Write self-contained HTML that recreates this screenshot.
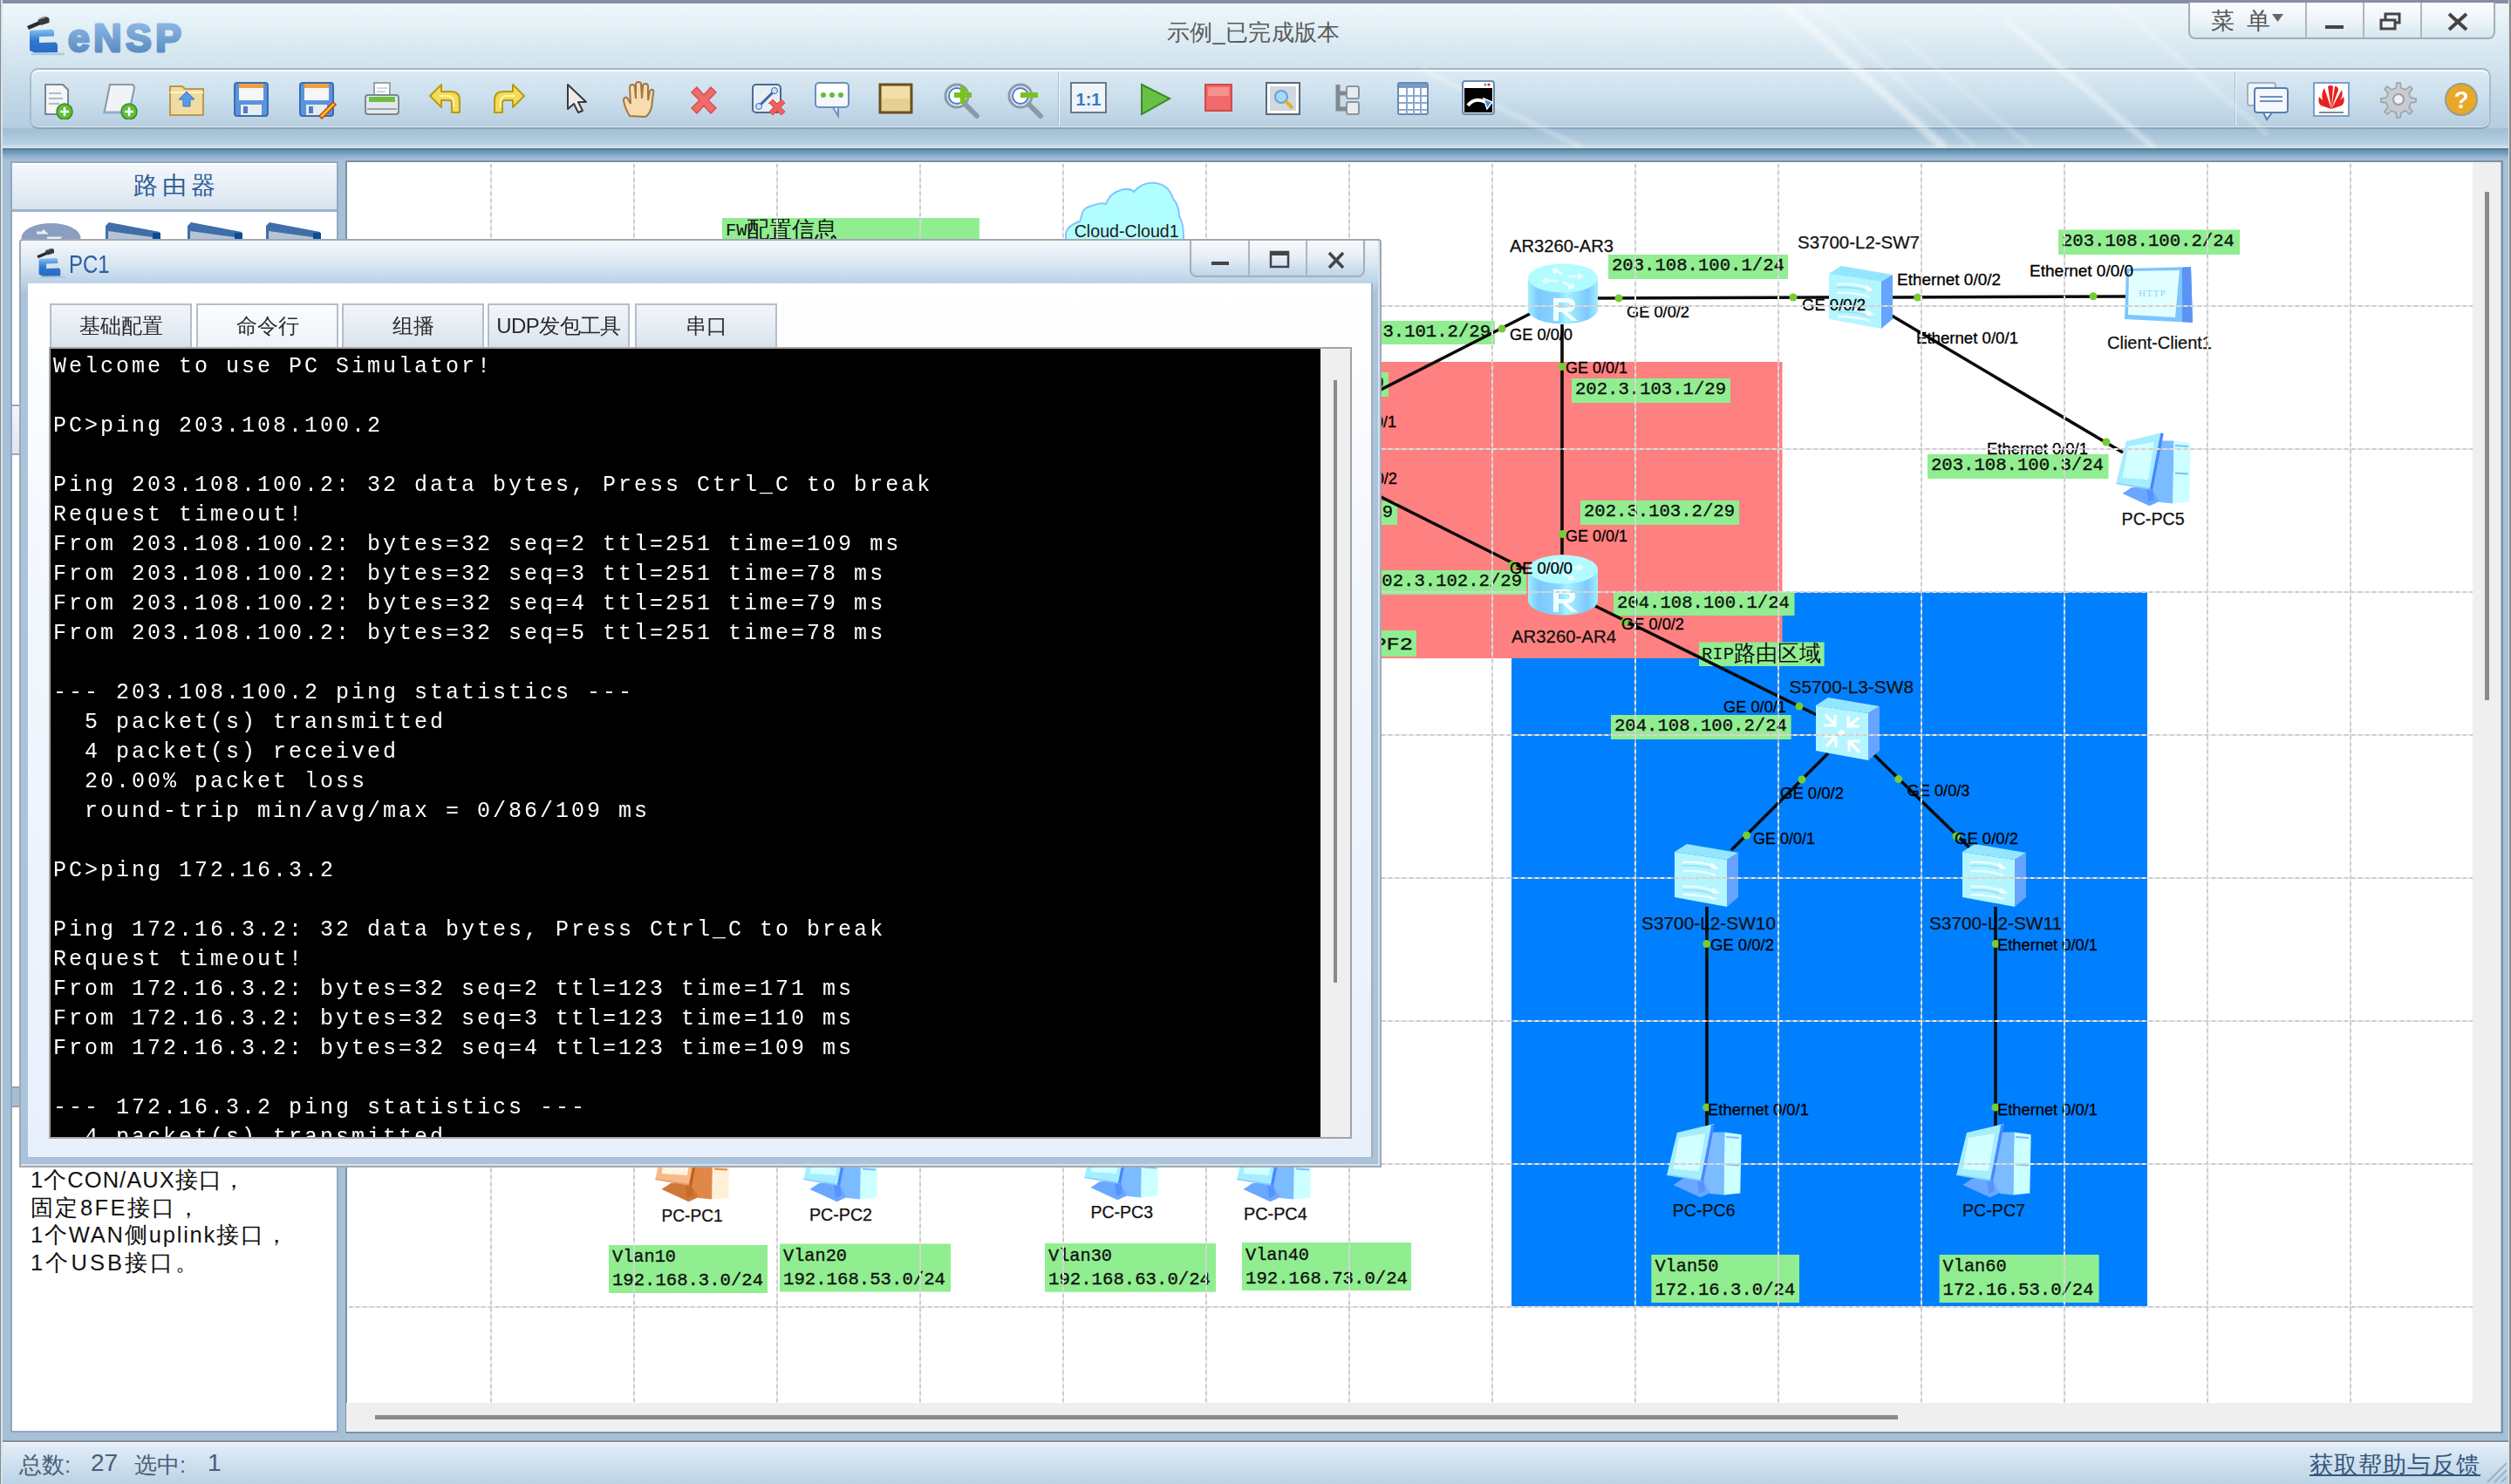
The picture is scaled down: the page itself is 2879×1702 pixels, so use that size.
<!DOCTYPE html>
<html><head><meta charset="utf-8"><style>
*{margin:0;padding:0;box-sizing:border-box}
html,body{width:2879px;height:1702px;overflow:hidden;background:#a6c0d6;font-family:"Liberation Sans",sans-serif}
.a{position:absolute}
#top{left:0;top:0;width:2879px;height:172px;background:linear-gradient(#8a8ca4 0,#8a8ca4 4px,#eef8fb 4px,#cfe2ed 78px,#b4cde0 146px,#a0bed5 148px,#b6d0e1 165px,#cfe1eb 168px,#cfe1eb 172px)}
#tb{left:34px;top:78px;width:2822px;height:70px;border:2px solid #a8bccc;border-top-color:#a2b6c6;border-bottom-color:#8ca4b8;border-radius:10px;background:linear-gradient(#dcebf4,#cadeec 50%,#b8cfe1);box-shadow:inset 0 2px 0 #fafdff,inset 0 -1px 0 #dde8ef}
.sep{top:2px;width:2px;height:62px;background:#a8bccd;border-right:1px solid #eef6fb}
#band{left:0;top:170px;width:2879px;height:17px;background:linear-gradient(#5f7d8e 0,#5f7d8e 2px,#5b90b5 2px,#6e9cbc 5px,#8fb0cb 9px,#a5c1d8 14px)}
#rb{left:2876px;top:0;width:3px;height:1702px;background:linear-gradient(90deg,#d8e4ee 0,#d8e4ee 1px,#8a8a8a 1px)}
#lb{left:0;top:0;width:4px;height:1702px;background:linear-gradient(90deg,#8a8a8a 0,#8a8a8a 1.5px,#d4e2ec 1.5px,#d4e2ec 3px,rgba(0,0,0,0) 3px)}
#lp{left:12px;top:185px;width:376px;height:1458px;background:#fff;border:2px solid #90a8c4}
#lph{left:0;top:0;width:372px;height:56px;background:linear-gradient(#f4f7fb,#e8eef6 50%,#d8e3ee);border-bottom:3px solid #9cb3c9;border-top:2px solid #fff}
#lph span{position:absolute;left:2px;width:372px;top:5px;text-align:center;font-size:28px;letter-spacing:5px;color:#2a5c9a}
#cvw{left:397px;top:186px;width:2438px;height:1423px;background:#fff;overflow:hidden}
#cvsvg{position:absolute;left:-397px;top:-186px}
#vsb{left:2835px;top:186px;width:32px;height:1423px;background:#efefef}
#hsb{left:397px;top:1609px;width:2470px;height:33px;background:#efefef}
#cvframe{left:396px;top:184px;width:2474px;height:1460px;border:2px solid #7e90a4}
#status{left:0;top:1652px;width:2879px;height:50px;background:linear-gradient(#e4eff8,#cfe0ee 50%,#bcd3e6);border-top:2px solid #888e96;box-shadow:inset 0 1px 0 #fff}
#win{left:22px;top:274px;width:1562px;height:1065px;border:2px solid #a2a8b0;border-radius:4px 4px 0 0;box-shadow:inset -2px 0 0 #d6e2ec,inset 0 -2px 0 #d6e2ec;background:linear-gradient(#f4f7fb,#dce8f3 25px,#b8d0e6 50px,#a9c4dc 60px,#a8c3db);}
#client{left:8px;top:49px;width:1542px;height:1003px;background:linear-gradient(#ffffff,#f4f8fe 30%,#e8f0fc);border-right:2px solid #a6aeb6;border-bottom:1px solid #b0b8c0}
#term{left:26px;top:75px;width:1456px;height:904px;background:#000;overflow:hidden}
#termb{left:24px;top:73px;width:1494px;height:908px;border:2px solid #a4a4a4}
#tsb{left:1482px;top:75px;width:34px;height:904px;background:#efefef}
#term pre{font-family:"Liberation Mono",monospace;font-size:25px;letter-spacing:3px;line-height:34px;color:#fff;padding:4px 0 0 3px}
.tab{top:23px;height:51px;width:163px;border:2px solid #b4bec8;border-bottom:none;background:linear-gradient(#f2f5fa,#e4ebf3 60%,#d8e2ec);font-size:24px;color:#2a2a2a;text-align:center;line-height:48px}
.wbtn{border:2px solid #a7adb5;border-top:none;background:linear-gradient(#f8fafd,#e8eff6 45%,#bcd5ea)}
</style></head><body>
<div id="top" class="a"></div>

<svg class="a" style="left:28px;top:18px" width="48" height="48" viewBox="0 0 48 48">
<defs><linearGradient id="lgb100" x1="0" x2="0" y1="0" y2="1"><stop offset="0" stop-color="#8cc0f0"/><stop offset=".5" stop-color="#2f78d0"/><stop offset="1" stop-color="#2a6cc0"/></linearGradient></defs>
<path d="M3 12 L17 6 L19 10 L5 16 Z" fill="#2a2a2a"/><path d="M15 5 L25 1.5 Q28 1 28.5 4 L28.5 8 L19 11 Z" fill="#3a3a3a"/><path d="M17 3.5 L25 1" stroke="#9a9a9a" stroke-width="1.5"/>
<path d="M6 17 L32 15.5 L34 18 L34 23.5 L17 24 L17 31 L36 30.5 L38 33 L38 42 L12 42.5 L6 40 Z" fill="url(#lgb100)"/>
<path d="M8 44 L46 44" stroke="#a8c4dc" stroke-width="2.5" opacity=".8"/>
</svg>
<svg class="a" style="left:70px;top:10px" width="160" height="60"><defs><linearGradient id="eg" gradientUnits="userSpaceOnUse" x1="0" y1="14" x2="0" y2="50"><stop offset="0" stop-color="#90bae4"/><stop offset="1" stop-color="#5b8cc2"/></linearGradient></defs><text x="8" y="48.7" font-family="Liberation Sans" font-weight="bold" font-size="44.5" fill="url(#eg)" stroke="url(#eg)" stroke-width="3" stroke-linejoin="round" textLength="130" lengthAdjust="spacing">eNSP</text></svg>
<div class="a" style="left:1338px;top:20px;font-size:25.5px;color:#5a5a5a;letter-spacing:0.3px">示例_已完成版本</div>
<div class="a wbtn" style="left:2509px;top:3px;width:352px;height:42px;border-radius:0 0 8px 8px;background:linear-gradient(#fbfdff,#eef5fa 50%,#d6e6f1)"></div><div class="a" style="left:2643px;top:3px;width:2px;height:41px;background:#b0b6bd"></div><div class="a" style="left:2709px;top:3px;width:2px;height:41px;background:#b0b6bd"></div><div class="a" style="left:2775px;top:3px;width:2px;height:41px;background:#b0b6bd"></div><div class="a" style="left:2535px;top:6px;font-size:27px;color:#555;letter-spacing:14px">菜单</div><svg class="a" style="left:2605px;top:16px" width="14" height="10"><path d="M0 0h13l-6.5 9z" fill="#666"/></svg><div class="a" style="left:2666px;top:29px;width:21px;height:4px;background:#444"></div><svg class="a" style="left:2728px;top:14px" width="26" height="22"><rect x="7" y="2" width="16" height="10" fill="none" stroke="#444" stroke-width="3"/><rect x="2" y="9" width="16" height="10" fill="#f0f4f8" stroke="#444" stroke-width="3"/></svg><svg class="a" style="left:2806px;top:14px" width="24" height="22"><path d="M2 2L22 20M22 2L2 20" stroke="#444" stroke-width="4"/></svg>
<div id="tb" class="a"><div class="a sep" style="left:1177px"></div><div class="a sep" style="left:2526px"></div></div>
<svg class="a" style="left:0;top:4px" width="2879" height="166"><defs><filter id="bl" x="-20%" y="-20%" width="140%" height="140%"><feGaussianBlur stdDeviation="2.5"/></filter></defs><g stroke="#fff" fill="none" filter="url(#bl)"><path d="M2040 -4 L2230 166" stroke-width="10" opacity=".45"/><path d="M2075 -4 L2265 166" stroke-width="4" opacity=".35"/><path d="M2300 20 L2470 166" stroke-width="8" opacity=".4"/><path d="M1630 76 L1815 166" stroke-width="5" opacity=".35"/><path d="M2180 40 L2330 166" stroke-width="4" opacity=".3"/><path d="M2420 -4 L2600 150" stroke-width="5" opacity=".3"/></g></svg>
<svg class="a" style="left:44px;top:93px" width="44" height="44" viewBox="0 0 44 44"><path d="M8 4 h20 l6 6 v28 h-26z" fill="#f4f6f8" stroke="#7a8894" stroke-width="2"/><path d="M12 14h14M12 20h16M12 26h12" stroke="#b0bcc6" stroke-width="2"/><circle cx="30" cy="35" r="9" fill="#5cbf3a" stroke="#3a8a22" stroke-width="1.5"/><path d="M25 35 h10 M30 30 v10" stroke="#fff" stroke-width="2.5"/></svg><svg class="a" style="left:116px;top:93px" width="44" height="44" viewBox="0 0 44 44"><path d="M10 4 h24 q4 0 4 4 l-6 28 h-26 q-2 0 -2 -2z" fill="#f0f4f6" stroke="#8a98a4" stroke-width="2"/><path d="M2 36 h26" stroke="#8ab0d0" stroke-width="3"/><circle cx="32" cy="35" r="9" fill="#5cbf3a" stroke="#3a8a22" stroke-width="1.5"/><path d="M27 35 h10 M32 30 v10" stroke="#fff" stroke-width="2.5"/></svg><svg class="a" style="left:193px;top:93px" width="44" height="44" viewBox="0 0 44 44"><path d="M2 6 h14 l3 3 h21 v30 h-38z" fill="#f0dca0" stroke="#b89a50" stroke-width="2"/><path d="M2 13 h38" stroke="#fff4c8" stroke-width="2"/><path d="M21 12 l9 9 h-5 v8 h-8 v-8 h-5z" fill="#5a9ae8" stroke="#3a70c0" stroke-width="1"/></svg><svg class="a" style="left:267px;top:93px" width="44" height="44" viewBox="0 0 44 44"><rect x="2" y="2" width="38" height="38" rx="3" fill="#5a94dc" stroke="#3a6eb0" stroke-width="2"/><rect x="7" y="3" width="28" height="5" fill="#f0a040"/><rect x="7" y="8" width="28" height="14" fill="#f4f6f8"/><rect x="9" y="27" width="24" height="12" fill="#e8ecf0"/><rect x="12" y="29" width="5" height="8" fill="#4a80c8"/></svg><svg class="a" style="left:342px;top:93px" width="46" height="44" viewBox="0 0 46 44"><rect x="2" y="2" width="38" height="38" rx="3" fill="#5a94dc" stroke="#3a6eb0" stroke-width="2"/><rect x="7" y="3" width="28" height="5" fill="#f0a040"/><rect x="7" y="8" width="28" height="14" fill="#f4f6f8"/><rect x="9" y="27" width="24" height="12" fill="#e8ecf0"/><rect x="12" y="29" width="5" height="8" fill="#4a80c8"/><path d="M24 40 l16 -16 l3 3 l-16 16z" fill="#f8c020" stroke="#c04020" stroke-width="1.5"/></svg><svg class="a" style="left:417px;top:93px" width="44" height="44" viewBox="0 0 44 44"><rect x="12" y="2" width="18" height="16" fill="#fff" stroke="#98a4ae" stroke-width="2"/><path d="M15 8h12M15 12h10" stroke="#aab"/><rect x="2" y="16" width="38" height="22" rx="3" fill="#e4e8ec" stroke="#7a8894" stroke-width="2"/><rect x="6" y="18" width="30" height="6" fill="#6cc040"/><path d="M4 32h34" stroke="#98a4ae" stroke-width="2"/></svg><svg class="a" style="left:490px;top:93px" width="44" height="44" viewBox="0 0 44 44"><path d="M37 36 L37 22 Q37 12 27 12 L16 12 L16 4 L3 17 L16 30 L16 22 L25 22 Q28 22 28 25 L28 36 Z" fill="#f2dc5a" stroke="#b89a18" stroke-width="2" stroke-linejoin="round"/><path d="M30 30 L30 24 Q30 18 24 17 L14 17" stroke="#fff6b0" stroke-width="2" fill="none"/></svg><svg class="a" style="left:564px;top:93px" width="44" height="44" viewBox="0 0 44 44"><path d="M3 36 L3 22 Q3 12 13 12 L24 12 L24 4 L37 17 L24 30 L24 22 L15 22 Q12 22 12 25 L12 36 Z" fill="#f2dc5a" stroke="#b89a18" stroke-width="2" stroke-linejoin="round"/><path d="M10 30 L10 24 Q10 18 16 17 L26 17" stroke="#fff6b0" stroke-width="2" fill="none"/></svg><svg class="a" style="left:646px;top:93px" width="34" height="44" viewBox="0 0 34 44"><path d="M5 4 L5 32 L12 26 L17 36 L22 34 L17 24 L26 24 Z" fill="#ececec" stroke="#3a3a3a" stroke-width="2" stroke-linejoin="round"/></svg><svg class="a" style="left:712px;top:93px" width="40" height="44" viewBox="0 0 40 44"><path d="M10 40 Q4 30 3 22 Q3 18 7 19 L11 26 L10 8 Q10 4 13 4 Q16 4 16 8 L17 20 L17 4 Q17 1 20 1 Q23 1 23 4 L24 20 L25 6 Q25 3 28 3 Q31 3 31 6 L31 22 L33 12 Q34 9 36 10 Q38 11 37 14 L35 30 Q33 38 28 41 Z" fill="#f8dcb0" stroke="#a07840" stroke-width="2"/></svg><svg class="a" style="left:789px;top:98px" width="36" height="40" viewBox="0 0 36 40"><path d="M4 8 L10 2 L18 11 L26 2 L32 8 L23 17 L32 26 L26 32 L18 23 L10 32 L4 26 L13 17 Z" fill="#f06a6a" stroke="#d85050" stroke-width="1.5" stroke-linejoin="round"/></svg><svg class="a" style="left:861px;top:95px" width="42" height="42" viewBox="0 0 42 42"><rect x="2" y="2" width="32" height="32" rx="4" fill="#e8eef4" stroke="#4a6a90" stroke-width="2"/><path d="M9 27 L27 9" stroke="#3a68a8" stroke-width="3"/><circle cx="9" cy="27" r="3.5" fill="#cce0f8" stroke="#3a68a8"/><circle cx="27" cy="9" r="3.5" fill="#cce0f8" stroke="#3a68a8"/><path d="M20 24 l5 -5 5 5 5 -5 4 4 -5 5 5 5 -4 4 -5 -5 -5 5 -4 -4 5 -5 -5 -5z" fill="#f06060" stroke="#d04848" stroke-width="1"/></svg><svg class="a" style="left:933px;top:93px" width="44" height="44" viewBox="0 0 44 44"><rect x="2" y="2" width="38" height="28" rx="4" fill="#f4f8fc" stroke="#6a90c0" stroke-width="2"/><rect x="4" y="4" width="34" height="10" fill="#fff"/><circle cx="11" cy="16" r="3" fill="#5cbf3a"/><circle cx="21" cy="16" r="3" fill="#5cbf3a"/><circle cx="31" cy="16" r="3" fill="#5cbf3a"/><path d="M22 30 l6 10 l0 -10z" fill="#f4f8fc" stroke="#6a90c0" stroke-width="2"/></svg><svg class="a" style="left:1007px;top:93px" width="40" height="44" viewBox="0 0 40 44"><rect x="2" y="4" width="36" height="32" fill="#e8d090" stroke="#6a5020" stroke-width="3"/><rect x="4" y="6" width="32" height="14" fill="#f0e0a8"/></svg><svg class="a" style="left:1080px;top:93px" width="44" height="44" viewBox="0 0 44 44"><circle cx="17" cy="17" r="13" fill="#d8e8f8" stroke="#8a9aaa" stroke-width="3"/><circle cx="17" cy="17" r="9" fill="#fff" stroke="#4a80c0" stroke-width="2"/><path d="M27 27 L40 40" stroke="#8a9aaa" stroke-width="6" stroke-linecap="round"/><path d="M14 16 h20 M24 6 v20" stroke="#7cc020" stroke-width="6"/></svg><svg class="a" style="left:1153px;top:93px" width="44" height="44" viewBox="0 0 44 44"><circle cx="17" cy="17" r="13" fill="#d8e8f8" stroke="#8a9aaa" stroke-width="3"/><circle cx="17" cy="17" r="9" fill="#fff" stroke="#4a80c0" stroke-width="2"/><path d="M27 27 L40 40" stroke="#8a9aaa" stroke-width="6" stroke-linecap="round"/><path d="M17 16 h20" stroke="#7cc020" stroke-width="6"/></svg><svg class="a" style="left:1226px;top:93px" width="44" height="44" viewBox="0 0 44 44"><rect x="2" y="2" width="40" height="34" fill="#f0f4f8" stroke="#6a7a8a" stroke-width="2"/><text x="22" y="28" font-family="Liberation Sans" font-weight="bold" font-size="20" fill="#3a7ac8" text-anchor="middle">1:1</text></svg><svg class="a" style="left:1305px;top:93px" width="40" height="44" viewBox="0 0 40 44"><path d="M4 4 L36 20 L4 38 Z" fill="#68c048" stroke="#3a8a22" stroke-width="2"/></svg><svg class="a" style="left:1380px;top:95px" width="36" height="36" viewBox="0 0 36 36"><rect x="2" y="2" width="30" height="30" fill="#f06a6a" stroke="#d04a4a" stroke-width="2"/><rect x="5" y="5" width="24" height="10" fill="#f89090"/></svg><svg class="a" style="left:1450px;top:93px" width="44" height="44" viewBox="0 0 44 44"><rect x="2" y="2" width="38" height="36" fill="#fff" stroke="#5a6a7a" stroke-width="2"/><rect x="6" y="6" width="30" height="28" fill="#d0d8e0"/><circle cx="19" cy="18" r="7" fill="#a8d8f8" stroke="#6aa0d0" stroke-width="2"/><path d="M24 23 l8 8" stroke="#e0b030" stroke-width="4"/></svg><svg class="a" style="left:1528px;top:93px" width="34" height="44" viewBox="0 0 34 44"><path d="M6 4 v28 h10 M6 14 h10" stroke="#808890" stroke-width="5" fill="none"/><rect x="16" y="6" width="14" height="14" rx="2" fill="#e8ecf0" stroke="#8a96a0" stroke-width="2"/><rect x="16" y="24" width="14" height="14" rx="2" fill="#e8ecf0" stroke="#8a96a0" stroke-width="2"/></svg><svg class="a" style="left:1601px;top:93px" width="40" height="44" viewBox="0 0 40 44"><rect x="2" y="2" width="34" height="36" rx="2" fill="#fff" stroke="#6a8ab0" stroke-width="2"/><rect x="3" y="3" width="32" height="5" fill="#7a9ac8"/><path d="M3 17h32M3 25h32M3 33h32M12 8v30M20 8v30M28 8v30" stroke="#8aa8d0" stroke-width="2"/></svg><svg class="a" style="left:1675px;top:91px" width="42" height="44" viewBox="0 0 42 44"><rect x="2" y="2" width="36" height="38" rx="3" fill="#fff" stroke="#6a8ab0" stroke-width="2"/><rect x="4" y="10" width="32" height="28" fill="#000"/><circle cx="28" cy="6" r="1.5" fill="#888"/><circle cx="32" cy="6" r="1.5" fill="#e02020"/><path d="M8 30 Q16 20 28 26" stroke="#fff" stroke-width="4" fill="none"/><path d="M26 22 l10 4 -6 8z" fill="#4a90e0" stroke="#fff" stroke-width="1.5"/></svg><svg class="a" style="left:2575px;top:93px" width="50" height="48" viewBox="0 0 50 48"><rect x="2" y="2" width="32" height="26" rx="3" fill="#eef3f8" stroke="#a0b0c0" stroke-width="2"/><rect x="10" y="8" width="38" height="28" rx="3" fill="#f4f8fc" stroke="#5a80b0" stroke-width="2"/><path d="M16 18h26M16 23h26" stroke="#6a90c0" stroke-width="2"/><path d="M20 36 l4 8 l6 -8z" fill="#f4f8fc" stroke="#5a80b0" stroke-width="2"/></svg><svg class="a" style="left:2651px;top:93px" width="44" height="44" viewBox="0 0 44 44"><rect x="2" y="2" width="40" height="38" fill="#fff" stroke="#7aa0d0" stroke-width="2"/><path d="M22 32 L14 8 Q10 14 12 22z M22 32 L18 6 Q22 4 24 6z M22 32 L26 6 Q30 6 30 10z M22 32 L34 10 Q36 16 32 22z M22 32 L8 18 Q6 24 10 28z M22 32 L36 18 Q38 24 34 28z" fill="#e82020"/><path d="M8 36h28" stroke="#888" stroke-width="2"/></svg><svg class="a" style="left:2728px;top:93px" width="44" height="44" viewBox="0 0 44 44"><path d="M20 2 l4 0 1 6 5 2 5 -4 3 3 -4 5 2 5 6 1 0 4 -6 1 -2 5 4 5 -3 3 -5 -4 -5 2 -1 6 -4 0 -1 -6 -5 -2 -5 4 -3 -3 4 -5 -2 -5 -6 -1 0 -4 6 -1 2 -5 -4 -5 3 -3 5 4 5 -2z" fill="#c8ccd0" stroke="#9aa0a8" stroke-width="1.5"/><circle cx="22" cy="21" r="6" fill="#eef2f6" stroke="#9aa0a8" stroke-width="2"/></svg><svg class="a" style="left:2802px;top:93px" width="42" height="44" viewBox="0 0 42 44"><circle cx="20" cy="21" r="18" fill="#e8a828" stroke="#9a9a9a" stroke-width="2"/><text x="20" y="31" font-family="Liberation Sans" font-weight="bold" font-size="28" fill="#fff" text-anchor="middle">?</text></svg>
<div id="band" class="a"></div>
<div id="lp" class="a"><div id="lph" class="a"><span>路由器</span></div><svg class="a" style="left:0;top:62px" width="376" height="40"><ellipse cx="44.5" cy="24" rx="34" ry="17" fill="#8a9ec0"/><path d="M28 18 h10 l-3 -3 M40 24 h14 l-3 3 M30 30 h8" stroke="#e8eef6" stroke-width="3" fill="none"/><polygon points="107,10 111,6 169,17 169,40 107,40" fill="#3f6ea8"/><polygon points="110,16 161,23 161,40 110,40" fill="#b4c4d8"/><rect x="161" y="18" width="9" height="22" fill="#0c4c94"/><circle cx="137" cy="32" r="3" fill="#fff"/><polygon points="201,10 205,6 263,17 263,40 201,40" fill="#3f6ea8"/><polygon points="204,16 255,23 255,40 204,40" fill="#b4c4d8"/><rect x="255" y="18" width="9" height="22" fill="#0c4c94"/><circle cx="231" cy="32" r="3" fill="#fff"/><polygon points="291,10 295,6 353,17 353,40 291,40" fill="#3f6ea8"/><polygon points="294,16 345,23 345,40 294,40" fill="#b4c4d8"/><rect x="345" y="18" width="9" height="22" fill="#0c4c94"/><circle cx="321" cy="32" r="3" fill="#fff"/><rect x="291" y="28" width="12" height="6" fill="#c02020" transform="translate(40 0)"/></svg><div class="a" style="left:0;top:277px;width:372px;height:58px;border-top:2px solid #98a8bc;border-bottom:2px solid #98a8bc;background:linear-gradient(#f2f6fc,#dde5f0)"></div><div class="a" style="left:0;top:1059px;width:372px;height:24px;border-top:2px solid #8ca2ba;border-bottom:2px solid #8ca2ba;background:#a4bed4"></div><div class="a" style="left:21px;top:1151.0px;font-size:25.5px;line-height:31.5px;color:#111;white-space:pre;letter-spacing:1.05px">1个CON/AUX接口，</div><div class="a" style="left:21px;top:1182.5px;font-size:25.5px;line-height:31.5px;color:#111;white-space:pre;letter-spacing:2.44px">固定8FE接口，</div><div class="a" style="left:21px;top:1214.0px;font-size:25.5px;line-height:31.5px;color:#111;white-space:pre;letter-spacing:1.82px">1个WAN侧uplink接口，</div><div class="a" style="left:21px;top:1245.5px;font-size:25.5px;line-height:31.5px;color:#111;white-space:pre;letter-spacing:3.1px">1个USB接口。</div></div>
<div id="cvw" class="a"><svg id="cvsvg" width="2879" height="1702"><defs><pattern id="gvm" x="562" y="4" width="164" height="8" patternUnits="userSpaceOnUse"><rect x="0" y="0" width="2" height="4" fill="#333"/></pattern><pattern id="ghm" x="0" y="350" width="8" height="164" patternUnits="userSpaceOnUse"><rect x="0" y="0" width="4" height="2" fill="#333"/></pattern><pattern id="gvd" x="562" y="4" width="164" height="8" patternUnits="userSpaceOnUse"><rect x="0" y="0" width="2" height="4" fill="#fff"/></pattern><pattern id="ghd" x="0" y="350" width="8" height="164" patternUnits="userSpaceOnUse"><rect x="0" y="0" width="4" height="2" fill="#fff"/></pattern><pattern id="gvs" x="562" y="4" width="164" height="8" patternUnits="userSpaceOnUse"><rect x="0" y="4" width="2" height="4" fill="#808080"/></pattern><pattern id="ghs" x="0" y="350" width="8" height="164" patternUnits="userSpaceOnUse"><rect x="4" y="0" width="4" height="2" fill="#808080"/></pattern><pattern id="gvn" x="562" y="4" width="164" height="8" patternUnits="userSpaceOnUse"><rect x="0" y="4" width="2" height="4" fill="#eaeaea"/></pattern><pattern id="ghn" x="0" y="350" width="8" height="164" patternUnits="userSpaceOnUse"><rect x="4" y="0" width="4" height="2" fill="#eaeaea"/></pattern><symbol id="router" viewBox="0 0 80 70" overflow="visible">
<defs><linearGradient id="rg" x1="0" x2="1" y1="0" y2="0"><stop offset="0" stop-color="#9ff0ff"/><stop offset=".15" stop-color="#7cc8ff"/><stop offset=".45" stop-color="#88d8ff"/><stop offset=".55" stop-color="#a8f4ff"/><stop offset=".85" stop-color="#7cc8ff"/><stop offset="1" stop-color="#9ff0ff"/></linearGradient></defs>
<path d="M0 17 L0 53 A40 16.5 0 0 0 80 53 L80 17 Z" fill="url(#rg)"/>
<ellipse cx="40" cy="17" rx="40" ry="16.5" fill="#b2fcff"/>
<g stroke="#f0ffff" stroke-width="2.6" fill="none" opacity=".9" stroke-linecap="round"><path d="M39 12 L29 7.5 M29 7.5 l5 -1 M29 7.5 l1.5 3.5"/><path d="M33 20 L17 20 M17 20 l4 -2.5 M17 20 l4 2.5"/><path d="M46 15 L62 15 M62 15 l-4 -2.5 M62 15 l-4 2.5"/><path d="M41 22 L52 28 M52 28 l-5 0.5 M52 28 l-1 -3.5"/></g>
<path d="M29 66 L29 40 L44 40 Q54 40 54 48 Q54 55 45 56 L57 66 L50 66 L39 56 L35 56 L35 66 Z M35 45 L35 51 L44 51 Q48 51 48 48 Q48 45 44 45 Z" fill="#f4ffff"/>
</symbol><symbol id="sw2" viewBox="0 0 73 72" overflow="visible">
<polygon points="0,9 60,18 60,72 0,61" fill="#b4f6ff"/>
<polygon points="0,9 14,0 73,10 60,18" fill="#94e6ff"/>
<polygon points="60,18 73,10 73,61 60,72" fill="#66a4ff"/>
<path d="M9 21 Q30 20 44 25 M9 31 Q30 30 47 36 M10 49 Q30 48 45 54 M10 58 Q30 58 47 63" stroke="#ffffff" stroke-width="2.5" fill="none" opacity=".75"/><path d="M42 21 l9 7 -10 2z M43 49 l9 7 -10 2z" fill="#fff" opacity=".8"/><path d="M9 25 Q30 24 44 29 M10 53 Q30 52 45 58" stroke="#7fd0f0" stroke-width="1.5" fill="none" opacity=".6"/>
</symbol><symbol id="sw3" viewBox="0 0 73 72" overflow="visible">
<polygon points="0,9 60,18 60,72 0,61" fill="#b4f6ff"/>
<polygon points="0,9 14,0 73,10 60,18" fill="#94e6ff"/>
<polygon points="60,18 73,10 73,61 60,72" fill="#66a4ff"/>
<path d="M11 20 L21 30 M49 23 L39 32 M12 56 L22 45 M50 63 L39 51" stroke="#fff" stroke-width="3.5" fill="none"/><path d="M22 20 L22 32 L9 32 M37 21 L37 33 L50 33 M9 44 L23 44 L23 57 M51 50 L38 50 L38 62" stroke="#fff" stroke-width="3" fill="none"/><circle cx="29.5" cy="40.5" r="3.5" fill="#fff"/>
</symbol><symbol id="pcb" viewBox="0 0 86 86" overflow="visible">
<polygon points="44,9.5 66.4,9.5 65.4,81.6 50,80 38,66" fill="#7abcff"/>
<polygon points="66.4,9.5 85.6,12.2 84.3,79.6 65.4,81.6" fill="#ccffff"/>
<path d="M68 15 l15 1 M68 46.6 l15 1" stroke="#7abcff" stroke-width="2"/>
<polygon points="18,63 40,63 50,79 38.5,84.3 7.5,70" fill="#6aa8ff"/>
<polygon points="35,64 42,64 44,77 37,80" fill="#4a86ff" opacity=".6"/>
<polygon points="12,10 54,0 41,66 0,59" fill="#a4eeff"/>
<polygon points="14,16 44,11 37,54 7.5,52" fill="#d2ffff"/>
<polygon points="2,58 40,64 41,66 0,59" fill="#4a86ff" opacity=".35"/>
<path d="M53 1 L40.5 65.5" stroke="#4a86ff" stroke-width="3.4"/>
</symbol><symbol id="pco" viewBox="0 0 86 86" overflow="visible">
<polygon points="44,9.5 66.4,9.5 65.4,81.6 50,80 38,66" fill="#e08848"/>
<polygon points="66.4,9.5 85.6,12.2 84.3,79.6 65.4,81.6" fill="#fff0d8"/>
<path d="M68 15 l15 1 M68 46.6 l15 1" stroke="#e08848" stroke-width="2"/>
<polygon points="18,63 40,63 50,79 38.5,84.3 7.5,70" fill="#d07838"/>
<polygon points="35,64 42,64 44,77 37,80" fill="#c06020" opacity=".6"/>
<polygon points="12,10 54,0 41,66 0,59" fill="#f8b888"/>
<polygon points="14,16 44,11 37,54 7.5,52" fill="#fff4e4"/>
<polygon points="2,58 40,64 41,66 0,59" fill="#c06020" opacity=".35"/>
<path d="M53 1 L40.5 65.5" stroke="#c06020" stroke-width="3.4"/>
</symbol><symbol id="clisym" viewBox="0 0 79 67" overflow="visible">
<polygon points="2,3 76,1 78,65 0,61" fill="#7cc6ff"/>
<polygon points="66,2 76,1 78,65 66,64" fill="#5c94f4"/>
<polygon points="5,6 63,5 58,59 4,56" fill="#e2ffff"/>
<text x="16" y="35" font-family="Liberation Serif" font-size="11" fill="#7fd8ff" letter-spacing="1">HTTP</text>
</symbol></defs><rect x="397" y="186" width="2438" height="1423" fill="#fff"/><rect x="1733" y="679" width="729" height="819" fill="#0080ff"/><rect x="1300" y="415" width="743.5" height="340" fill="#ff8080"/><rect x="1844" y="292" width="206" height="28" fill="#90ee90"/><text x="1848" y="310.0" font-family="Liberation Mono" font-size="20.6" fill="#111" textLength="198" lengthAdjust="spacingAndGlyphs" stroke="#111" stroke-width="0.35">203.108.100.1/24</text><rect x="1532" y="368" width="182" height="27" fill="#90ee90"/><text x="1536" y="386.0" font-family="Liberation Mono" font-size="20.6" fill="#111" textLength="173" lengthAdjust="spacingAndGlyphs" stroke="#111" stroke-width="0.35">202.3.101.2/29</text><rect x="1802" y="434" width="182" height="28" fill="#90ee90"/><text x="1806" y="452.0" font-family="Liberation Mono" font-size="20.6" fill="#111" textLength="173" lengthAdjust="spacingAndGlyphs" stroke="#111" stroke-width="0.35">202.3.103.1/29</text><rect x="1812" y="574" width="182" height="28" fill="#90ee90"/><text x="1816" y="592.0" font-family="Liberation Mono" font-size="20.6" fill="#111" textLength="173" lengthAdjust="spacingAndGlyphs" stroke="#111" stroke-width="0.35">202.3.103.2/29</text><rect x="1568" y="654" width="182" height="28" fill="#90ee90"/><text x="1572" y="672.0" font-family="Liberation Mono" font-size="20.6" fill="#111" textLength="173" lengthAdjust="spacingAndGlyphs" stroke="#111" stroke-width="0.35">202.3.102.2/29</text><rect x="1420" y="575" width="182" height="27" fill="#90ee90"/><text x="1424" y="593.0" font-family="Liberation Mono" font-size="20.6" fill="#111" textLength="173" lengthAdjust="spacingAndGlyphs" stroke="#111" stroke-width="0.35">202.3.102.1/29</text><rect x="1420" y="427" width="172" height="28" fill="#90ee90"/><text x="1424" y="445.0" font-family="Liberation Mono" font-size="20.6" fill="#111" textLength="163" lengthAdjust="spacingAndGlyphs" stroke="#111" stroke-width="0.35">202.3.101.1/29</text><rect x="1540" y="723" width="84" height="30" fill="#90ee90"/><text x="1544" y="745.0" font-family="Liberation Mono" font-size="20.6" fill="#111" textLength="76" lengthAdjust="spacingAndGlyphs" stroke="#111" stroke-width="0.35">OSPF2</text><rect x="1850" y="679" width="207.5" height="27" fill="#90ee90"/><text x="1854" y="697.0" font-family="Liberation Mono" font-size="20.6" fill="#111" textLength="198" lengthAdjust="spacingAndGlyphs" stroke="#111" stroke-width="0.35">204.108.100.1/24</text><rect x="1847" y="820" width="206.6" height="28" fill="#90ee90"/><text x="1851" y="838.0" font-family="Liberation Mono" font-size="20.6" fill="#111" textLength="198" lengthAdjust="spacingAndGlyphs" stroke="#111" stroke-width="0.35">204.108.100.2/24</text><rect x="1948" y="736.5" width="143.6" height="27.5" fill="#90ee90"/><text x="1951" y="756" font-family="Liberation Mono" font-size="20.6" fill="#111">RIP</text><text x="1988" y="758" font-family="Liberation Sans" font-size="26" fill="#111" textLength="100" lengthAdjust="spacingAndGlyphs">路由区域</text><rect x="2360" y="263.5" width="208" height="28.5" fill="#90ee90"/><text x="2364" y="282.0" font-family="Liberation Mono" font-size="20.6" fill="#111" textLength="198" lengthAdjust="spacingAndGlyphs" stroke="#111" stroke-width="0.35">203.108.100.2/24</text><rect x="2210" y="521" width="207.5" height="28" fill="#90ee90"/><text x="2214" y="539.0" font-family="Liberation Mono" font-size="20.6" fill="#111" textLength="198" lengthAdjust="spacingAndGlyphs" stroke="#111" stroke-width="0.35">203.108.100.3/24</text><rect x="1893.4" y="1439" width="169.6" height="55" fill="#90ee90"/><text x="1897.4" y="1458.0" font-family="Liberation Mono" font-size="20.6" fill="#111" textLength="73" lengthAdjust="spacingAndGlyphs" stroke="#111" stroke-width="0.35">Vlan50</text><text x="1897.4" y="1484.5" font-family="Liberation Mono" font-size="20.6" fill="#111" textLength="161" lengthAdjust="spacingAndGlyphs" stroke="#111" stroke-width="0.35">172.16.3.0/24</text><rect x="2223.6" y="1439" width="183" height="55" fill="#90ee90"/><text x="2227.6" y="1458.0" font-family="Liberation Mono" font-size="20.6" fill="#111" textLength="73" lengthAdjust="spacingAndGlyphs" stroke="#111" stroke-width="0.35">Vlan60</text><text x="2227.6" y="1484.5" font-family="Liberation Mono" font-size="20.6" fill="#111" textLength="173" lengthAdjust="spacingAndGlyphs" stroke="#111" stroke-width="0.35">172.16.53.0/24</text><rect x="698" y="1428" width="182" height="55" fill="#90ee90"/><text x="702" y="1447.0" font-family="Liberation Mono" font-size="20.6" fill="#111" textLength="73" lengthAdjust="spacingAndGlyphs" stroke="#111" stroke-width="0.35">Vlan10</text><text x="702" y="1473.5" font-family="Liberation Mono" font-size="20.6" fill="#111" textLength="173" lengthAdjust="spacingAndGlyphs" stroke="#111" stroke-width="0.35">192.168.3.0/24</text><rect x="894" y="1426.5" width="196" height="55" fill="#90ee90"/><text x="898" y="1446.0" font-family="Liberation Mono" font-size="20.6" fill="#111" textLength="73" lengthAdjust="spacingAndGlyphs" stroke="#111" stroke-width="0.35">Vlan20</text><text x="898" y="1472.5" font-family="Liberation Mono" font-size="20.6" fill="#111" textLength="186" lengthAdjust="spacingAndGlyphs" stroke="#111" stroke-width="0.35">192.168.53.0/24</text><rect x="1198" y="1426" width="196" height="55.7" fill="#90ee90"/><text x="1202" y="1446.0" font-family="Liberation Mono" font-size="20.6" fill="#111" textLength="73" lengthAdjust="spacingAndGlyphs" stroke="#111" stroke-width="0.35">Vlan30</text><text x="1202" y="1472.5" font-family="Liberation Mono" font-size="20.6" fill="#111" textLength="186" lengthAdjust="spacingAndGlyphs" stroke="#111" stroke-width="0.35">192.168.63.0/24</text><rect x="1424" y="1425" width="194" height="55" fill="#90ee90"/><text x="1428" y="1445.0" font-family="Liberation Mono" font-size="20.6" fill="#111" textLength="73" lengthAdjust="spacingAndGlyphs" stroke="#111" stroke-width="0.35">Vlan40</text><text x="1428" y="1471.5" font-family="Liberation Mono" font-size="20.6" fill="#111" textLength="186" lengthAdjust="spacingAndGlyphs" stroke="#111" stroke-width="0.35">192.168.73.0/24</text><rect x="828" y="250" width="295" height="40" fill="#90ee90"/><text x="832" y="270" font-family="Liberation Mono" font-size="20.6" fill="#111">FW</text><text x="856" y="272" font-family="Liberation Sans" font-size="26" fill="#111" textLength="104" lengthAdjust="spacingAndGlyphs">配置信息</text><text x="1731" y="289" font-family="Liberation Sans" font-size="19.5" fill="#111" textLength="119" lengthAdjust="spacingAndGlyphs" stroke="#111" stroke-width="0.25">AR3260-AR3</text><text x="1733" y="737" font-family="Liberation Sans" font-size="19.5" fill="#111" textLength="120" lengthAdjust="spacingAndGlyphs" stroke="#111" stroke-width="0.25">AR3260-AR4</text><text x="2061" y="285" font-family="Liberation Sans" font-size="19.5" fill="#111" textLength="140" lengthAdjust="spacingAndGlyphs" stroke="#111" stroke-width="0.25">S3700-L2-SW7</text><text x="2051.5" y="795" font-family="Liberation Sans" font-size="19.5" fill="#111" textLength="142.5" lengthAdjust="spacingAndGlyphs" stroke="#111" stroke-width="0.25">S5700-L3-SW8</text><text x="1882" y="1066" font-family="Liberation Sans" font-size="19.5" fill="#111" textLength="154" lengthAdjust="spacingAndGlyphs" stroke="#111" stroke-width="0.25">S3700-L2-SW10</text><text x="2212" y="1066" font-family="Liberation Sans" font-size="19.5" fill="#111" textLength="152" lengthAdjust="spacingAndGlyphs" stroke="#111" stroke-width="0.25">S3700-L2-SW11</text><text x="2416" y="399.5" font-family="Liberation Sans" font-size="19.5" fill="#111" textLength="120" lengthAdjust="spacingAndGlyphs" stroke="#111" stroke-width="0.25">Client-Client1</text><text x="2432.6" y="601.6" font-family="Liberation Sans" font-size="19.5" fill="#111" textLength="72" lengthAdjust="spacingAndGlyphs" stroke="#111" stroke-width="0.25">PC-PC5</text><text x="1917.7" y="1395.4" font-family="Liberation Sans" font-size="19.5" fill="#111" textLength="72" lengthAdjust="spacingAndGlyphs" stroke="#111" stroke-width="0.25">PC-PC6</text><text x="2250" y="1395.4" font-family="Liberation Sans" font-size="19.5" fill="#111" textLength="72" lengthAdjust="spacingAndGlyphs" stroke="#111" stroke-width="0.25">PC-PC7</text><text x="758.6" y="1400.6" font-family="Liberation Sans" font-size="19.5" fill="#111" textLength="70" lengthAdjust="spacingAndGlyphs" stroke="#111" stroke-width="0.25">PC-PC1</text><text x="928" y="1400" font-family="Liberation Sans" font-size="19.5" fill="#111" textLength="72" lengthAdjust="spacingAndGlyphs" stroke="#111" stroke-width="0.25">PC-PC2</text><text x="1250.5" y="1396.8" font-family="Liberation Sans" font-size="19.5" fill="#111" textLength="71.5" lengthAdjust="spacingAndGlyphs" stroke="#111" stroke-width="0.25">PC-PC3</text><text x="1426" y="1398.6" font-family="Liberation Sans" font-size="19.5" fill="#111" textLength="72.7" lengthAdjust="spacingAndGlyphs" stroke="#111" stroke-width="0.25">PC-PC4</text><line x1="1754" y1="360" x2="1400" y2="540" stroke="#0a0a0a" stroke-width="3.6"/><line x1="1832" y1="342" x2="2097" y2="341" stroke="#0a0a0a" stroke-width="3.6"/><line x1="1791" y1="372" x2="1791" y2="636" stroke="#0a0a0a" stroke-width="3.6"/><line x1="1749" y1="653" x2="1400" y2="478" stroke="#0a0a0a" stroke-width="3.6"/><line x1="1829" y1="695" x2="2083" y2="820" stroke="#0a0a0a" stroke-width="3.6"/><line x1="2170" y1="341" x2="2437" y2="340" stroke="#0a0a0a" stroke-width="3.6"/><line x1="2169" y1="362" x2="2434" y2="519" stroke="#0a0a0a" stroke-width="3.6"/><line x1="2096" y1="864" x2="1985" y2="975" stroke="#0a0a0a" stroke-width="3.6"/><line x1="2148" y1="865" x2="2258" y2="972" stroke="#0a0a0a" stroke-width="3.6"/><line x1="1957" y1="1040" x2="1957" y2="1292" stroke="#0a0a0a" stroke-width="3.6"/><line x1="2288" y1="1040" x2="2288" y2="1292" stroke="#0a0a0a" stroke-width="3.6"/><use href="#router" x="1752" y="302" width="80" height="70"/><use href="#router" x="1752" y="636" width="80" height="70"/><use href="#sw2" x="2097" y="305" width="73" height="72"/><use href="#sw3" x="2082" y="800" width="73" height="72"/><use href="#sw2" x="1920" y="968" width="73" height="72"/><use href="#sw2" x="2250" y="968" width="73" height="72"/><use href="#pcb" x="2426" y="496" width="86" height="86"/><use href="#pcb" x="1911" y="1289" width="86" height="86"/><use href="#pcb" x="2243" y="1289" width="86" height="86"/><use href="#pco" x="751" y="1294" width="86" height="86"/><use href="#pcb" x="921" y="1294" width="86" height="86"/><use href="#pcb" x="1243" y="1292" width="86" height="86"/><use href="#pcb" x="1418" y="1294" width="86" height="86"/><use href="#clisym" x="2436" y="305" width="79" height="67"/><path d="M1222 290 L1222 268 Q1224 258 1238 254 L1240 248 Q1241 238 1252 236 Q1262 232 1268 234 Q1272 222 1285 218 Q1295 215 1300 220 Q1310 208 1325 210 Q1340 212 1345 228 Q1352 236 1352 248 Q1357 256 1357 270 L1357 290 Z" fill="#b2ffff" stroke="#84c4ff" stroke-width="2"/><circle cx="1856" cy="342" r="4.5" fill="#77cc33"/><circle cx="2056" cy="341" r="4.5" fill="#77cc33"/><circle cx="1722" cy="377" r="4.5" fill="#77cc33"/><circle cx="1791" cy="420.5" r="4.5" fill="#77cc33"/><circle cx="1791.5" cy="612.5" r="4.5" fill="#77cc33"/><circle cx="1734" cy="648" r="4.5" fill="#77cc33"/><circle cx="1863" cy="713" r="4.5" fill="#77cc33"/><circle cx="2063" cy="810" r="4.5" fill="#77cc33"/><circle cx="2066" cy="894" r="4.5" fill="#77cc33"/><circle cx="2002.6" cy="958" r="4.5" fill="#77cc33"/><circle cx="2176.7" cy="893.6" r="4.5" fill="#77cc33"/><circle cx="2243" cy="959" r="4.5" fill="#77cc33"/><circle cx="1956.7" cy="1082.6" r="4.5" fill="#77cc33"/><circle cx="2288" cy="1082.6" r="4.5" fill="#77cc33"/><circle cx="1956.7" cy="1270" r="4.5" fill="#77cc33"/><circle cx="2288" cy="1270" r="4.5" fill="#77cc33"/><circle cx="2198.7" cy="341" r="4.5" fill="#77cc33"/><circle cx="2400" cy="339.7" r="4.5" fill="#77cc33"/><circle cx="2415" cy="507" r="4.5" fill="#77cc33"/><text x="1865" y="364" font-family="Liberation Sans" font-size="18.5" fill="#000" textLength="72" lengthAdjust="spacingAndGlyphs" stroke="#000" stroke-width="0.3">GE 0/0/2</text><text x="2066" y="356" font-family="Liberation Sans" font-size="18.5" fill="#000" textLength="73" lengthAdjust="spacingAndGlyphs" stroke="#000" stroke-width="0.3">GE 0/0/2</text><text x="1731" y="390" font-family="Liberation Sans" font-size="18.5" fill="#000" textLength="72" lengthAdjust="spacingAndGlyphs" stroke="#000" stroke-width="0.3">GE 0/0/0</text><text x="1795" y="428" font-family="Liberation Sans" font-size="18.5" fill="#000" textLength="71" lengthAdjust="spacingAndGlyphs" stroke="#000" stroke-width="0.3">GE 0/0/1</text><text x="1795" y="621" font-family="Liberation Sans" font-size="18.5" fill="#000" textLength="71" lengthAdjust="spacingAndGlyphs" stroke="#000" stroke-width="0.3">GE 0/0/1</text><text x="1731" y="658" font-family="Liberation Sans" font-size="18.5" fill="#000" textLength="72" lengthAdjust="spacingAndGlyphs" stroke="#000" stroke-width="0.3">GE 0/0/0</text><text x="1859" y="722" font-family="Liberation Sans" font-size="18.5" fill="#000" textLength="72" lengthAdjust="spacingAndGlyphs" stroke="#000" stroke-width="0.3">GE 0/0/2</text><text x="1976" y="816.5" font-family="Liberation Sans" font-size="18.5" fill="#000" textLength="72" lengthAdjust="spacingAndGlyphs" stroke="#000" stroke-width="0.3">GE 0/0/1</text><text x="2041" y="916" font-family="Liberation Sans" font-size="18.5" fill="#000" textLength="73" lengthAdjust="spacingAndGlyphs" stroke="#000" stroke-width="0.3">GE 0/0/2</text><text x="2010" y="968" font-family="Liberation Sans" font-size="18.5" fill="#000" textLength="71" lengthAdjust="spacingAndGlyphs" stroke="#000" stroke-width="0.3">GE 0/0/1</text><text x="2186.5" y="913" font-family="Liberation Sans" font-size="18.5" fill="#000" textLength="72" lengthAdjust="spacingAndGlyphs" stroke="#000" stroke-width="0.3">GE 0/0/3</text><text x="2241" y="968" font-family="Liberation Sans" font-size="18.5" fill="#000" textLength="73" lengthAdjust="spacingAndGlyphs" stroke="#000" stroke-width="0.3">GE 0/0/2</text><text x="1961" y="1090" font-family="Liberation Sans" font-size="18.5" fill="#000" textLength="73" lengthAdjust="spacingAndGlyphs" stroke="#000" stroke-width="0.3">GE 0/0/2</text><text x="2290" y="1090" font-family="Liberation Sans" font-size="18.5" fill="#000" textLength="115" lengthAdjust="spacingAndGlyphs" stroke="#000" stroke-width="0.3">Ethernet 0/0/1</text><text x="1958" y="1279" font-family="Liberation Sans" font-size="18.5" fill="#000" textLength="116" lengthAdjust="spacingAndGlyphs" stroke="#000" stroke-width="0.3">Ethernet 0/0/1</text><text x="2290" y="1279" font-family="Liberation Sans" font-size="18.5" fill="#000" textLength="115" lengthAdjust="spacingAndGlyphs" stroke="#000" stroke-width="0.3">Ethernet 0/0/1</text><text x="2175" y="327" font-family="Liberation Sans" font-size="18.5" fill="#000" textLength="119" lengthAdjust="spacingAndGlyphs" stroke="#000" stroke-width="0.3">Ethernet 0/0/2</text><text x="2327" y="317" font-family="Liberation Sans" font-size="18.5" fill="#000" textLength="119" lengthAdjust="spacingAndGlyphs" stroke="#000" stroke-width="0.3">Ethernet 0/0/0</text><text x="2197" y="394" font-family="Liberation Sans" font-size="18.5" fill="#000" textLength="117" lengthAdjust="spacingAndGlyphs" stroke="#000" stroke-width="0.3">Ethernet 0/0/1</text><text x="2278" y="521" font-family="Liberation Sans" font-size="18.5" fill="#000" textLength="116" lengthAdjust="spacingAndGlyphs" stroke="#000" stroke-width="0.3">Ethernet 0/0/1</text><text x="1530" y="490" font-family="Liberation Sans" font-size="18.5" fill="#000" textLength="71" lengthAdjust="spacingAndGlyphs" stroke="#000" stroke-width="0.3">GE 0/0/1</text><text x="1530" y="555" font-family="Liberation Sans" font-size="18.5" fill="#000" textLength="72" lengthAdjust="spacingAndGlyphs" stroke="#000" stroke-width="0.3">GE 0/0/2</text><text x="1231.7" y="271.8" font-family="Liberation Sans" font-size="19.5" fill="#1a1a1a" textLength="120" lengthAdjust="spacingAndGlyphs">Cloud-Cloud1</text><rect x="400" y="188" width="2435" height="1421" fill="url(#gvm)" style="mix-blend-mode:multiply"/><rect x="400" y="188" width="2435" height="1421" fill="url(#gvd)" style="mix-blend-mode:difference"/><rect x="400" y="188" width="2435" height="1421" fill="url(#gvs)" style="mix-blend-mode:screen"/><rect x="400" y="188" width="2435" height="1421" fill="url(#gvn)" style="mix-blend-mode:multiply"/><rect x="400" y="188" width="2435" height="1421" fill="url(#ghm)" style="mix-blend-mode:multiply"/><rect x="400" y="188" width="2435" height="1421" fill="url(#ghd)" style="mix-blend-mode:difference"/><rect x="400" y="188" width="2435" height="1421" fill="url(#ghs)" style="mix-blend-mode:screen"/><rect x="400" y="188" width="2435" height="1421" fill="url(#ghn)" style="mix-blend-mode:multiply"/></svg></div>
<div id="cvframe" class="a"></div>
<div id="vsb" class="a"><div class="a" style="left:14px;top:34px;width:5px;height:583px;background:#8a8a8a"></div></div>
<div id="hsb" class="a"><div class="a" style="left:33px;top:14px;width:1746px;height:5px;background:#8a8a8a"></div></div>
<div id="status" class="a"><div class="a" style="left:22px;top:9px;font-size:25.5px;color:#4a5e76;white-space:pre">总数:</div><div class="a" style="left:104px;top:8px;font-size:28px;color:#4a5e76;white-space:pre">27</div><div class="a" style="left:154px;top:9px;font-size:25.5px;color:#4a5e76;white-space:pre">选中:</div><div class="a" style="left:238px;top:8px;font-size:28px;color:#4a5e76;white-space:pre">1</div><div class="a" style="left:2648px;top:8px;font-size:27px;color:#33567e;text-decoration:underline;letter-spacing:1px">获取帮助与反馈</div><svg class="a" style="left:2846px;top:18px" width="30" height="30"><path d="M28 6L6 28M28 14L14 28M28 22L22 28" stroke="#9ab0c4" stroke-width="2"/></svg></div>
<div id="rb" class="a"></div>
<div id="lb" class="a"></div>
<div id="win" class="a"><svg class="a" style="left:16px;top:8px" width="37" height="37" viewBox="0 0 48 48">
<defs><linearGradient id="lgb78" x1="0" x2="0" y1="0" y2="1"><stop offset="0" stop-color="#8cc0f0"/><stop offset=".5" stop-color="#2f78d0"/><stop offset="1" stop-color="#2a6cc0"/></linearGradient></defs>
<path d="M3 12 L17 6 L19 10 L5 16 Z" fill="#2a2a2a"/><path d="M15 5 L25 1.5 Q28 1 28.5 4 L28.5 8 L19 11 Z" fill="#3a3a3a"/><path d="M17 3.5 L25 1" stroke="#9a9a9a" stroke-width="1.5"/>
<path d="M6 17 L32 15.5 L34 18 L34 23.5 L17 24 L17 31 L36 30.5 L38 33 L38 42 L12 42.5 L6 40 Z" fill="url(#lgb78)"/>
<path d="M8 44 L46 44" stroke="#a8c4dc" stroke-width="2.5" opacity=".8"/>
</svg><div class="a" style="left:55px;top:10px;font-size:30px;color:#2c5ea2;transform:scaleX(.8);transform-origin:0 0">PC1</div><div class="a wbtn" style="left:1340px;top:0;width:201px;height:42px;border-radius:0 0 8px 8px"></div><div class="a" style="left:1407px;top:0;width:2px;height:41px;background:#b0b6bd"></div><div class="a" style="left:1473px;top:0;width:2px;height:41px;background:#b0b6bd"></div><div class="a" style="left:1365px;top:24px;width:20px;height:4px;background:#444"></div><svg class="a" style="left:1431px;top:11px" width="26" height="22"><rect x="2" y="2" width="20" height="17" fill="none" stroke="#444" stroke-width="2.5"/><rect x="2" y="2" width="20" height="4" fill="#444"/></svg><svg class="a" style="left:1497px;top:12px" width="22" height="22"><path d="M3 2L19 19M19 2L3 19" stroke="#444" stroke-width="3.5"/></svg><div id="client" class="a"><div class="a tab" style="left:25px;">基础配置</div><div class="a tab" style="left:193px;background:linear-gradient(#fbfcfe,#eef3f9);">命令行</div><div class="a tab" style="left:360px;">组播</div><div class="a tab" style="left:527px;letter-spacing:-0.6px;">UDP发包工具</div><div class="a tab" style="left:696px;">串口</div><div id="termb" class="a"></div><div id="term" class="a"><pre>Welcome to use PC Simulator!

PC&gt;ping 203.108.100.2

Ping 203.108.100.2: 32 data bytes, Press Ctrl_C to break
Request timeout!
From 203.108.100.2: bytes=32 seq=2 ttl=251 time=109 ms
From 203.108.100.2: bytes=32 seq=3 ttl=251 time=78 ms
From 203.108.100.2: bytes=32 seq=4 ttl=251 time=79 ms
From 203.108.100.2: bytes=32 seq=5 ttl=251 time=78 ms

--- 203.108.100.2 ping statistics ---
  5 packet(s) transmitted
  4 packet(s) received
  20.00% packet loss
  round-trip min/avg/max = 0/86/109 ms

PC&gt;ping 172.16.3.2

Ping 172.16.3.2: 32 data bytes, Press Ctrl_C to break
Request timeout!
From 172.16.3.2: bytes=32 seq=2 ttl=123 time=171 ms
From 172.16.3.2: bytes=32 seq=3 ttl=123 time=110 ms
From 172.16.3.2: bytes=32 seq=4 ttl=123 time=109 ms

--- 172.16.3.2 ping statistics ---
  4 packet(s) transmitted
</pre></div><div id="tsb" class="a"><div class="a" style="left:15px;top:36px;width:4px;height:691px;background:#8a8a8a"></div></div></div></div>
</body></html>
